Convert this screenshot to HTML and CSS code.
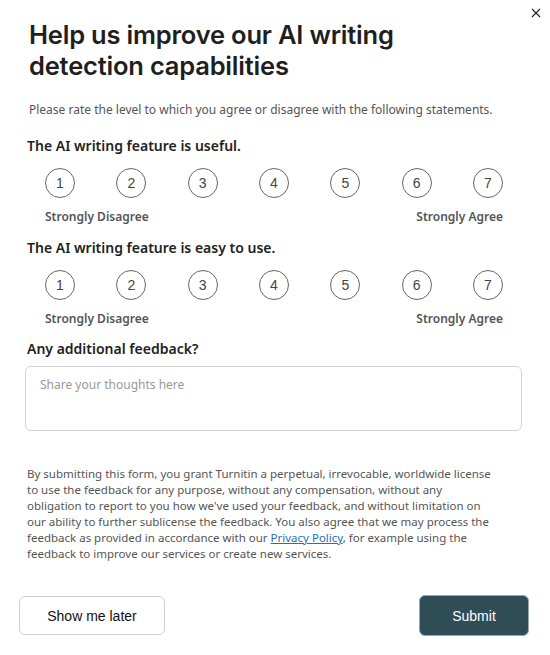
FILE: index.html
```html
<!DOCTYPE html>
<html lang="en">
<head>
    <meta charset="UTF-8">
    <meta name="viewport" content="width=device-width, initial-scale=1.0">
    <title>AI writing feedback</title>
    <link rel="stylesheet" href="styles.css">
</head>
<body>
    <div class="modal">
        <button class="close-btn" aria-label="Close">
            <svg width="10" height="10" viewBox="0 0 10 10">
                <path d="M1 1 L9 9 M9 1 L1 9" stroke="#222" stroke-width="1.1" fill="none"/>
            </svg>
        </button>

        <h1>Help us improve our AI writing detection capabilities</h1>
        <p class="intro">Please rate the level to which you agree or disagree with the following statements.</p>

        <div class="question">
            <h2>The AI writing feature is useful.</h2>
            <div class="scale">
                <div class="options">
                    <span class="option">1</span>
                    <span class="option">2</span>
                    <span class="option">3</span>
                    <span class="option">4</span>
                    <span class="option">5</span>
                    <span class="option">6</span>
                    <span class="option">7</span>
                </div>
                <div class="scale-labels">
                    <span>Strongly Disagree</span>
                    <span>Strongly Agree</span>
                </div>
            </div>
        </div>

        <div class="question">
            <h2>The AI writing feature is easy to use.</h2>
            <div class="scale">
                <div class="options">
                    <span class="option">1</span>
                    <span class="option">2</span>
                    <span class="option">3</span>
                    <span class="option">4</span>
                    <span class="option">5</span>
                    <span class="option">6</span>
                    <span class="option">7</span>
                </div>
                <div class="scale-labels">
                    <span>Strongly Disagree</span>
                    <span>Strongly Agree</span>
                </div>
            </div>
        </div>

        <div class="feedback">
            <h2>Any additional feedback?</h2>
            <textarea placeholder="Share your thoughts here"></textarea>
        </div>

        <p class="legal">By submitting this form, you grant Turnitin a perpetual, irrevocable, worldwide license<br>
            to use the feedback for any purpose, without any compensation, without any<br>
            obligation to report to you how we've used your feedback, and without limitation on<br>
            our ability to further sublicense the feedback. You also agree that we may process the<br>
            feedback as provided in accordance with our <a href="#">Privacy Policy</a>, for example using the<br>
            feedback to improve our services or create new services.</p>

        <div class="actions">
            <button class="btn btn-secondary">Show me later</button>
            <button class="btn btn-primary">Submit</button>
        </div>
    </div>
</body>
</html>
```

FILE: styles.css
```css
/* Estilos gerais */
body {
    margin: 0;
    padding: 0;
    background-color: #fff;
    font-family: 'Noto Sans', 'Open Sans', sans-serif;
    color: #333;
}

.modal {
    position: relative;
    width: 550px;
    height: 655px;
    box-sizing: border-box;
    padding: 19px 22px 0 27px;
}

.close-btn {
    position: absolute;
    top: 7px;
    right: 8px;
    width: 12px;
    height: 12px;
    padding: 0;
    border: none;
    background: transparent;
    display: flex;
    align-items: center;
    justify-content: center;
    cursor: pointer;
}

h1 {
    font-family: 'Inter', 'Noto Sans', sans-serif;
    font-size: 25.5px;
    font-weight: 600;
    line-height: 31px;
    letter-spacing: -0.2px;
    color: #1f1f1f;
    margin: 0 0 0 2px;
    width: 400px;
}

.intro {
    font-size: 12px;
    line-height: 16px;
    color: #555;
    margin: 21px 0 0 2px;
}

h2 {
    font-size: 14px;
    font-weight: 600;
    line-height: 18px;
    color: #222;
    margin: 0;
}

.question {
    margin-top: 19px;
}

.question + .question {
    margin-top: 14px;
}

.scale {
    width: 458px;
    margin: 13px 0 0 18px;
}

.options {
    display: flex;
    justify-content: space-between;
}

.option {
    width: 28px;
    height: 28px;
    border: 1px solid #666;
    border-radius: 50%;
    display: flex;
    align-items: center;
    justify-content: center;
    font-family: 'Liberation Sans', Arial, sans-serif;
    font-size: 14px;
    color: #444;
}

.scale-labels {
    display: flex;
    justify-content: space-between;
    margin-top: 11px;
    font-size: 12px;
    font-weight: 600;
    line-height: 16px;
    color: #555;
}

.feedback {
    margin-top: 13px;
}

textarea {
    display: block;
    width: 497px;
    height: 65px;
    margin: 8px 0 0 -2px;
    box-sizing: border-box;
    padding: 9px 14px;
    border: 1px solid #d4d4d4;
    border-radius: 6px;
    resize: none;
    font-family: 'Noto Sans', sans-serif;
    font-size: 12px;
    color: #333;
}

textarea::placeholder {
    color: #999;
}

.legal {
    font-size: 11.5px;
    line-height: 16px;
    color: #555;
    margin: 35px 0 0 0;
    width: 500px;
}

.legal a {
    color: #2a6ebb;
}

.actions {
    display: flex;
    justify-content: space-between;
    align-items: center;
    margin: 33px 0 0 -8px;
    width: 510px;
}

.btn {
    font-family: 'Liberation Sans', Arial, sans-serif;
    font-size: 14px;
    border-radius: 6px;
    cursor: pointer;
}

.btn-secondary {
    width: 146px;
    height: 39px;
    background-color: #fff;
    border: 1px solid #d0d0d0;
    color: #111;
}

.btn-primary {
    width: 110px;
    height: 41px;
    background-color: #2e4d57;
    border: 1px solid #9aa5a9;
    color: #fff;
}
```
